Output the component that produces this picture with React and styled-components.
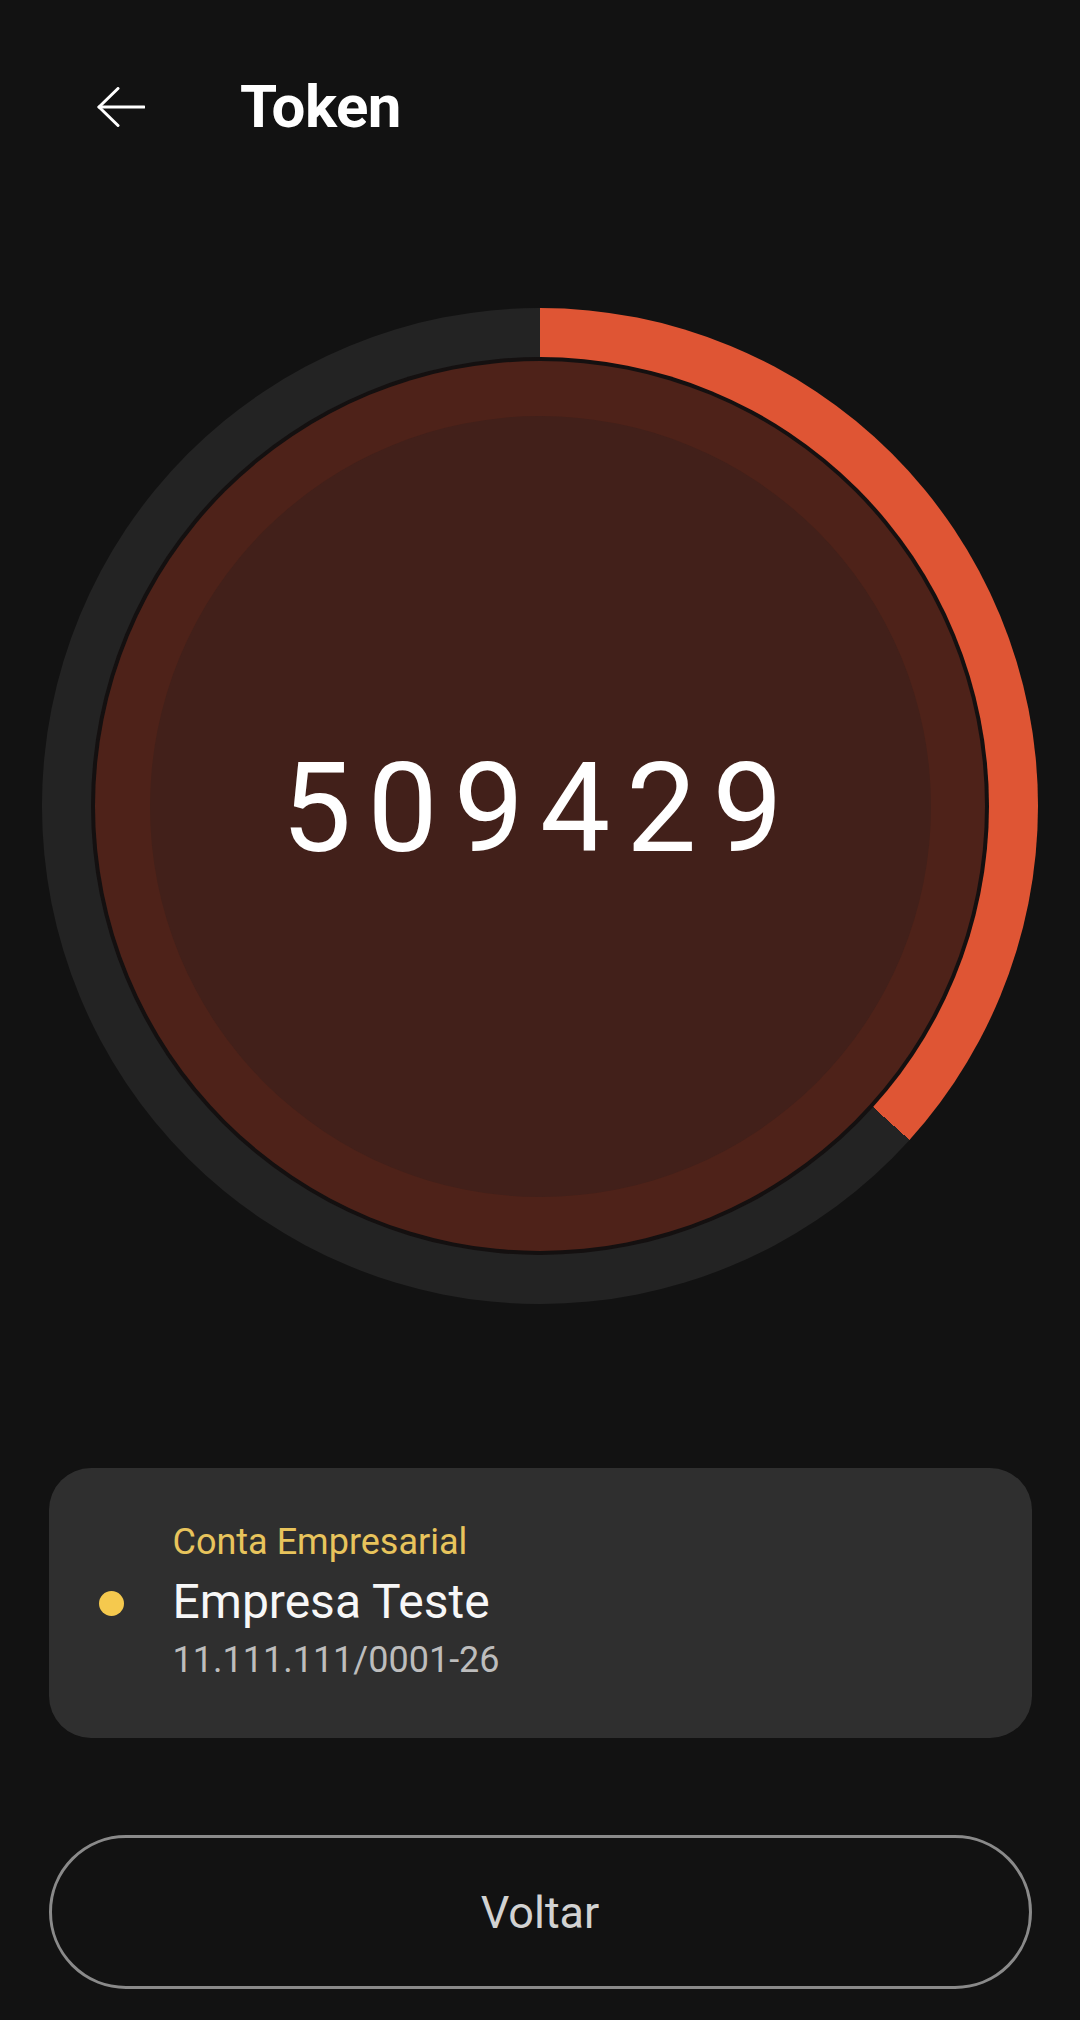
import React from "react";
import styled, { createGlobalStyle } from "styled-components";

const colors = {
  page: "#121212",
  ringTrack: "#232323",
  ringProgress: "#DF5534",
  ringGap: "#141010",
  dialOuter: "#4E2219",
  dialInner: "#42201A",
  card: "#2F2F2F",
  accent: "#F5C94E",
  label: "#E8C45C",
  muted: "#BDBDBD",
  outline: "#8A8A8A",
};

const GlobalStyle = createGlobalStyle`
  html, body {
    margin: 0;
    padding: 0;
    background: ${colors.page};
  }

  body {
    font-family: Roboto, "Noto Sans", "Liberation Sans", sans-serif;
    color: #fff;
  }
`;

const Page = styled.div`
  min-height: 2020px;
  display: flex;
  flex-direction: column;
  align-items: center;
  overflow: hidden;
`;

const Header = styled.header`
  align-self: stretch;
  height: 214px;
  padding-left: 97px;
  display: flex;
  align-items: center;
  gap: 95px;
`;

const BackButton = styled.button`
  width: 48px;
  height: 40px;
  padding: 0;
  border: none;
  background: none;
  color: #fff;
  display: flex;

  svg {
    width: 48px;
    height: 40px;
  }
`;

const Title = styled.h1`
  margin: 0;
  font-size: 60px;
  font-weight: 700;
  letter-spacing: -0.5px;
  line-height: 1;
`;

// progress ring drawn as a conic gradient, inner discs stacked by flex centering
const Dial = styled.div`
  margin-top: 94px;
  flex-shrink: 0;
  width: 996px;
  height: 996px;
  border-radius: 50%;
  background: conic-gradient(
    ${(props) => props.theme?.progress || colors.ringProgress} 0deg ${(props) => props.progress * 360}deg,
    ${colors.ringTrack} ${(props) => props.progress * 360}deg 360deg
  );
  display: flex;
  align-items: center;
  justify-content: center;
`;

const DialGap = styled.div`
  width: 898px;
  height: 898px;
  border-radius: 50%;
  background: ${colors.ringGap};
  display: flex;
  align-items: center;
  justify-content: center;
`;

const DialOuter = styled.div`
  width: 890px;
  height: 890px;
  border-radius: 50%;
  background: ${colors.dialOuter};
  display: flex;
  align-items: center;
  justify-content: center;
`;

const DialInner = styled.div`
  width: 781px;
  height: 781px;
  border-radius: 50%;
  background: ${colors.dialInner};
  display: flex;
  align-items: center;
  justify-content: center;
`;

const Code = styled.div`
  font-size: 125px;
  font-weight: 400;
  line-height: 1;
  letter-spacing: 16px;
  margin-top: 4px;
  color: #fff;
`;

const AccountCard = styled.section`
  margin-top: 164px;
  width: 983px;
  height: 270px;
  box-sizing: border-box;
  border-radius: 42px;
  background: ${colors.card};
  padding-left: 50px;
  display: flex;
  align-items: center;
  gap: 49px;
`;

const StatusDot = styled.span`
  width: 25px;
  height: 25px;
  border-radius: 50%;
  background: ${(props) => props.color};
  flex-shrink: 0;
`;

const AccountInfo = styled.div`
  display: flex;
  flex-direction: column;
  margin-top: -6px;
`;

const AccountType = styled.div`
  color: ${colors.label};
  font-size: 36px;
  line-height: 54px;
`;

const AccountName = styled.div`
  color: #f7f7f7;
  font-size: 48px;
  line-height: 66px;
`;

const AccountDoc = styled.div`
  color: ${colors.muted};
  font-size: 36px;
  line-height: 50px;
`;

const OutlineButton = styled.button`
  margin-top: 97px;
  width: 983px;
  height: 154px;
  box-sizing: border-box;
  border: 3px solid ${colors.outline};
  border-radius: 77px;
  background: transparent;
  color: #d2d2d2;
  font-family: Roboto, "Liberation Sans", sans-serif;
  font-size: 45px;
  font-weight: 400;
`;

const ArrowLeft = () => (
  <svg viewBox="0 0 48 40" fill="none" stroke="currentColor" strokeWidth="3" strokeLinecap="round" strokeLinejoin="round">
    <path d="M2 20 H47" />
    <path d="M21 1.5 L2 20 L21 38.5" />
  </svg>
);

export default function App() {
  return (
    <>
      <GlobalStyle />
      <Page>
        <Header>
          <BackButton aria-label="Voltar">
            <ArrowLeft />
          </BackButton>
          <Title>Token</Title>
        </Header>

        <Dial progress={0.367}>
          <DialGap>
            <DialOuter>
              <DialInner>
                <Code>509429</Code>
              </DialInner>
            </DialOuter>
          </DialGap>
        </Dial>

        <AccountCard>
          <StatusDot color={colors.accent} />
          <AccountInfo>
            <AccountType>Conta Empresarial</AccountType>
            <AccountName>Empresa Teste</AccountName>
            <AccountDoc>11.111.111/0001-26</AccountDoc>
          </AccountInfo>
        </AccountCard>

        <OutlineButton>Voltar</OutlineButton>
      </Page>
    </>
  );
}
